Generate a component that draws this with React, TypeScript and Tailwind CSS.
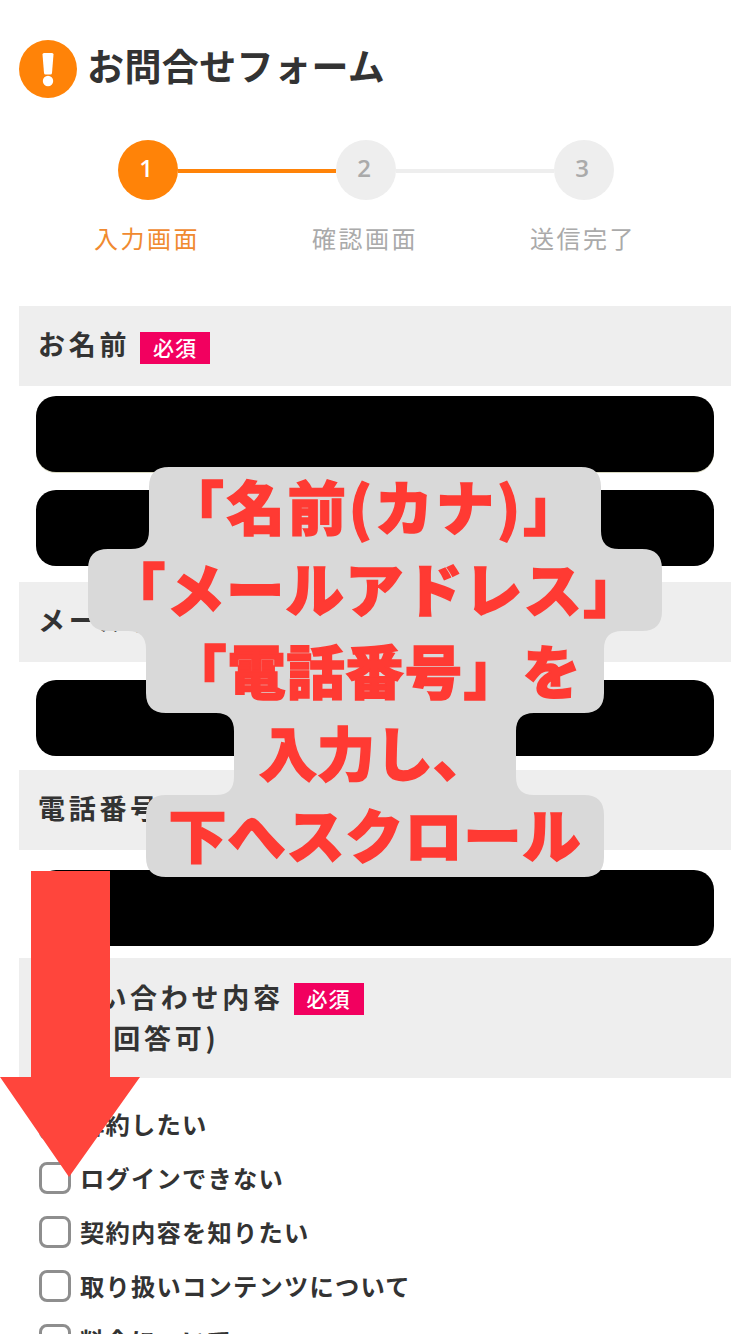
const Badge = () => (
  <span className="mt-1 inline-flex h-8 w-[70px] items-center justify-center bg-[#f2005f] text-[21px] font-medium tracking-[1px] text-white">
    必須
  </span>
)

const Black = ({ className = '' }: { className?: string }) => (
  <div className={`mx-[17px] h-[76px] rounded-[20px] bg-black ${className}`} />
)

const Heading = ({ label, className = '' }: { label: string; className?: string }) => (
  <div className={`flex h-20 items-center gap-[10px] bg-[#eeeeee] pl-[19px] text-[27px] font-bold tracking-[3.700px] text-[#333] ${className}`}>
    <span className="-mt-1">{label}</span>
    <Badge />
  </div>
)

const options = ['解約したい', 'ログインできない', '契約内容を知りたい', '取り扱いコンテンツについて', '料金について']

const callout = [
  { text: '「名前(カナ)」', cls: 'tracking-[3px]' },
  { text: '「メールアドレス」', cls: 'tracking-[1.500px]' },
  { text: '「電話番号」を', cls: 'tracking-[1px]' },
  { text: '入力し、', cls: '' },
  { text: '下へスクロール', cls: 'tracking-[1px]' },
]

export default function App() {
  return (
    <div className="relative h-[1334px] w-[750px] overflow-hidden bg-white font-['Noto_Sans_CJK_JP',sans-serif]">
      <div className="px-[19px] pt-10">
        {/* title */}
        <div className="flex h-[58px] items-center gap-[10px]">
          <svg width="58" height="58" viewBox="0 0 58 58">
            <circle cx="29" cy="29" r="29" fill="#ff8308" />
            <path d="M23.500 14.500 Q23.500 13 25 13 H33 Q34.500 13 34.500 14.500 L33 33 Q32.800 34.500 31.500 34.500 H26.500 Q25.200 34.500 25 33 Z" fill="#fff" />
            <circle cx="29" cy="41" r="5.200" fill="#fff" />
          </svg>
          <h1 className="-mt-2 text-[37px] leading-none font-bold tracking-[0.400px] text-[#333]">お問合せフォーム</h1>
        </div>

        {/* steps */}
        <div className="mt-[42px] ml-[99px] flex w-[496px] items-center">
          <div className="flex h-[60px] w-[60px] shrink-0 items-center justify-center rounded-full bg-[#ff8308] pr-1 pb-1 font-['Open_Sans',sans-serif] text-[24px] font-semibold text-white">1</div>
          <div className="mt-0.5 h-1 flex-1 bg-[#ff8308]" />
          <div className="flex h-[60px] w-[60px] shrink-0 items-center justify-center rounded-full bg-[#eeeeee] pr-1 pb-1 font-['Open_Sans',sans-serif] text-[24px] font-semibold text-[#aaa]">2</div>
          <div className="mt-0.5 h-1 flex-1 bg-[#eeeeee]" />
          <div className="flex h-[60px] w-[60px] shrink-0 items-center justify-center rounded-full bg-[#eeeeee] pr-1 pb-1 font-['Open_Sans',sans-serif] text-[24px] font-semibold text-[#aaa]">3</div>
        </div>
        <div className="mt-5 ml-[19px] grid w-[654px] grid-cols-3 text-center text-[24px] leading-9 tracking-[2.500px] text-[#aaa]">
          <span className="text-[#f08a30]">入力画面</span>
          <span>確認画面</span>
          <span>送信完了</span>
        </div>

        {/* form */}
        <Heading label="お名前" className="mt-[50px]" />
        <Black className="mt-2.5 shadow-[0_1px_0_#d8d8c0]" />
        <Black className="mt-[18px]" />
        <Heading label="メールアドレス" className="mt-4" />
        <Black className="mt-[18px]" />
        <Heading label="電話番号" className="mt-3.5" />
        <Black className="mt-5" />
        <div className="mt-3 h-[120px] bg-[#eeeeee] pt-[18px] pl-[19px] text-[27px] leading-[41px] font-bold tracking-[3.700px] text-[#333]">
          <div className="flex items-center gap-[10px]">
            <span>お問い合わせ内容</span>
            <Badge />
          </div>
          <div>(複数回答可)</div>
        </div>

        <div className="mt-[30px] ml-5 flex flex-col gap-[22px]">
          {options.map(o => (
            <div key={o} className="flex h-8 items-center gap-[9px] text-[24.300px] font-bold tracking-[1.200px] text-[#333]">
              <span className="h-8 w-8 shrink-0 rounded-lg border-[3px] border-[#8e8e8e] bg-white" />
              <span>{o}</span>
            </div>
          ))}
        </div>
      </div>

      {/* callout */}
      <svg className="absolute top-[467px] left-[88px]" width="574" height="410" viewBox="88 467 574 410">
        <path
          d="M169 467 H581 Q601 467 601 487 V531 Q601 549 619 549 H642 Q662 549 662 569 V611 Q662 631 642 631 H622 Q604 631 604 649 V693 Q604 713 584 713 H534 Q516 713 516 731 V777 Q516 795 534 795 H584 Q604 795 604 815 V857 Q604 877 584 877 H166 Q146 877 146 857 V815 Q146 795 166 795 H216 Q234 795 234 777 V731 Q234 713 216 713 H166 Q146 713 146 693 V649 Q146 631 128 631 H108 Q88 631 88 611 V569 Q88 549 108 549 H131 Q149 549 149 531 V487 Q149 467 169 467 Z"
          fill="#d9d9d9"
        />
      </svg>
      <div className="absolute top-[464px] left-0 w-[750px] text-center text-[58px] font-black text-[#ff3a33] [-webkit-text-stroke:1.500px_#ff3a33]">
        {callout.map(l => (
          <div key={l.text} className={`h-[82px] leading-[82px] whitespace-nowrap ${l.cls}`}>{l.text}</div>
        ))}
      </div>

      {/* arrow */}
      <svg className="absolute top-[871px] left-0" width="141" height="308" viewBox="0 0 141 308">
        <path d="M31 0 H110 V206 H140 L69 306 L0 206 H31 Z" fill="#ff453c" />
      </svg>
    </div>
  )
}
